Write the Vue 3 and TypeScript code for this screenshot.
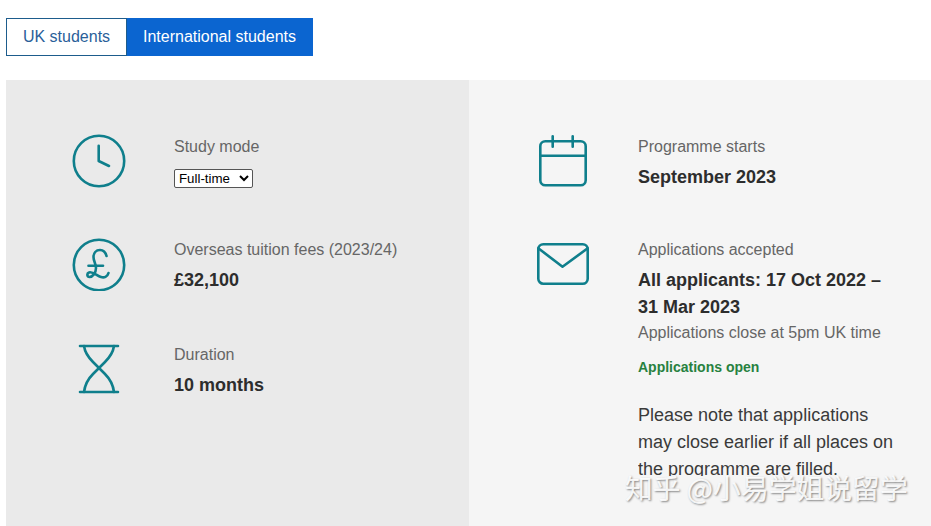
<script setup lang="ts">
import { ref } from 'vue'

const tab = ref<'uk' | 'intl'>('intl')
const studyMode = ref('Full-time')
</script>

<template>
  <div class="page">
    <div class="tabs">
      <button class="tab uk" :class="{ active: tab === 'uk' }" @click="tab = 'uk'">UK students</button>
      <button class="tab intl" :class="{ active: tab === 'intl' }" @click="tab = 'intl'">International students</button>
    </div>

    <div class="panels">
      <section class="panel left">
        <div class="row row-mode">
          <div class="icon">
            <svg width="54" height="54" viewBox="0 0 54 54">
              <circle cx="27" cy="27" r="25.2" />
              <path d="M26.7 11.7V27L37 32" />
            </svg>
          </div>
          <div class="text">
            <div class="label">Study mode</div>
            <select v-model="studyMode" class="mode">
              <option>Full-time</option>
            </select>
          </div>
        </div>

        <div class="row row-fees">
          <div class="icon">
            <svg width="54" height="54" viewBox="0 0 54 54">
              <circle cx="27" cy="28" r="25.2" />
              <path d="M34.500 19C33.500 15 31 13 28 13C24 13 21.500 16 21.500 20C21.500 24 24 27 24 31C24 36 20.500 40 17.500 40C15 40 14.500 36.500 17 35.500C20.500 34 25 39 29 40C32 41 35.500 40 36.500 36" />
              <path d="M16.500 28.700H31" />
            </svg>
          </div>
          <div class="text">
            <div class="label">Overseas tuition fees (2023/24)</div>
            <div class="value">£32,100</div>
          </div>
        </div>

        <div class="row">
          <div class="icon">
            <svg width="54" height="54" viewBox="0 0 54 54">
              <path d="M8 4H46M8 50H46" />
              <path d="M12 4C13 11 17 16 21 20C24 23 30 29 33 32C37 36 41 42 42 50" />
              <path d="M42 4C41 11 37 16 33 20C30 23 24 29 21 32C17 36 13 42 12 50" />
            </svg>
          </div>
          <div class="text">
            <div class="label">Duration</div>
            <div class="value">10 months</div>
          </div>
        </div>
      </section>

      <section class="panel right">
        <div class="row row-start">
          <div class="icon">
            <svg width="54" height="54" viewBox="0 0 54 54">
              <rect x="4.300" y="7.300" width="45.400" height="44" rx="5" />
              <path d="M4.300 21.700H49.700M16.700 2.300V12.700M36.700 2.300V12.700" />
            </svg>
          </div>
          <div class="text">
            <div class="label">Programme starts</div>
            <div class="value">September 2023</div>
          </div>
        </div>

        <div class="row">
          <div class="icon">
            <svg width="54" height="54" viewBox="0 0 54 54">
              <rect x="2.300" y="7.300" width="49.400" height="39.400" rx="5" />
              <path d="M2.300 11.300L26.500 29.700L51.700 11.300" />
            </svg>
          </div>
          <div class="text">
            <div class="label">Applications accepted</div>
            <div class="value">All applicants: 17 Oct 2022 – 31 Mar 2023</div>
            <div class="label">Applications close at 5pm UK time</div>
            <div class="status">Applications open</div>
            <p class="note">Please note that applications may close earlier if all places on the programme are filled.</p>
          </div>
        </div>
      </section>
    </div>

    <div class="watermark">知乎 @小易学姐说留学</div>
  </div>
</template>

<style scoped>
.page {
  position: relative;
  display: flex;
  flex-direction: column;
  height: 526px;
  padding: 18px 0 0 6px;
  box-sizing: border-box;
  overflow: hidden;
  font-family: "Liberation Sans", Arial, sans-serif;
  color: #2d2d2d;
}

.tabs {
  display: flex;
  height: 38px;
}

.tab {
  margin: 0;
  padding: 0;
  font: inherit;
  font-size: 16px;
  border: 1px solid #1d5c8c;
  background: #fff;
  color: #2a6099;
  cursor: pointer;
}

.tab.uk {
  width: 121px;
}

.tab.intl {
  width: 186px;
  padding-right: 1px;
}

.tab.active {
  border-color: #0b65d0;
  background: #0b65d0;
  color: #fff;
}

.panels {
  display: flex;
  flex: 1;
  margin-top: 24px;
}

.panel {
  box-sizing: border-box;
  padding-top: 54px;
}

.left {
  width: 463px;
  padding-left: 66px;
  background: #eaeaea;
}

.right {
  width: 462px;
  padding-left: 67px;
  background: #f5f5f5;
}

.row {
  display: flex;
}

.row-mode {
  height: 103px;
}

.row-fees {
  height: 105px;
}

.row-start {
  height: 103px;
}

.icon {
  flex: none;
  width: 102px;
}

.icon svg {
  display: block;
  fill: none;
  stroke: #0f7f8c;
  stroke-width: 2.6;
  stroke-linecap: round;
  stroke-linejoin: round;
}

.text {
  width: 258px;
  padding-top: 1px;
}

.label {
  font-size: 16px;
  line-height: 24px;
  color: #666;
}

.value {
  margin-top: 5px;
  font-size: 18px;
  font-weight: 700;
  line-height: 27px;
  color: #2d2d2d;
}

.mode {
  display: block;
  margin-top: 10px;
  font-family: "Liberation Sans", Arial, sans-serif;
  font-size: 13.3px;
  color: #000;
  background: #fff;
  border: 1px solid #555;
  border-radius: 2px;
  width: 79px;
  height: 19px;
  padding: 0;
}

.status {
  margin-top: 12px;
  font-size: 14px;
  font-weight: 700;
  line-height: 20px;
  color: #27813f;
}

/* the block is cut off partway through its last line */
.note {
  margin: 25px 0 0;
  max-height: 74px;
  overflow: hidden;
  font-size: 18px;
  line-height: 27px;
  color: #3a3a3a;
}

.watermark {
  position: absolute;
  left: 625px;
  top: 468px;
  font-family: "Noto Sans CJK SC", sans-serif;
  font-size: 27.800px;
  line-height: 38px;
  white-space: nowrap;
  color: rgba(255, 255, 255, 0.9);
  text-shadow: 1px 1px 2px rgba(0, 0, 0, 0.45);
}
</style>
